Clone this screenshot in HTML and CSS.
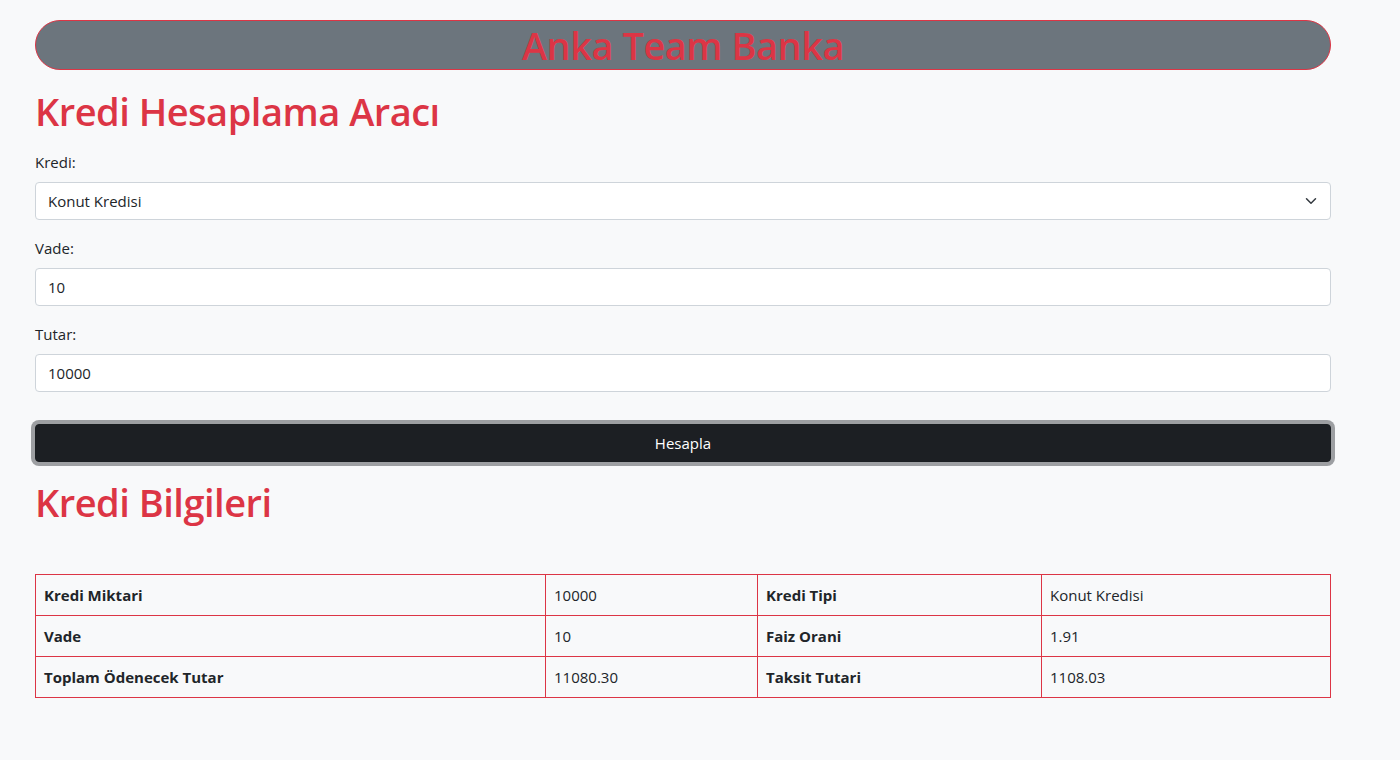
FILE: index.html
```html
<!DOCTYPE html>
<html lang="tr">
<head>
<meta charset="UTF-8">
<meta name="viewport" content="width=device-width, initial-scale=1.0">
<title>Anka Team Banka</title>
<link rel="stylesheet" href="styles.css">
</head>
<body>

<div class="container">

<h1 class="banner">Anka Team Banka</h1>

<h1 class="baslik">Kredi Hesaplama Aracı</h1>

<form class="form">
  <div class="alan">
    <label class="etiket" for="kredi">Kredi:</label>
    <div class="secim">
      <select id="kredi" class="kutu">
        <option>Konut Kredisi</option>
        <option>İhtiyaç Kredisi</option>
        <option>Taşıt Kredisi</option>
      </select>
      <svg class="ok" viewBox="0 0 16 16" width="16" height="12"><path d="m2 5 6 6 6-6" fill="none" stroke="#343a40" stroke-width="2" stroke-linecap="round" stroke-linejoin="round"/></svg>
    </div>
  </div>

  <div class="alan">
    <label class="etiket" for="vade">Vade:</label>
    <input id="vade" class="kutu" type="text" value="10">
  </div>

  <div class="alan">
    <label class="etiket" for="tutar">Tutar:</label>
    <input id="tutar" class="kutu" type="text" value="10000">
  </div>

  <button type="button" class="buton">Hesapla</button>
</form>

<h1 class="baslik baslik-alt">Kredi Bilgileri</h1>

<table class="tablo">
  <colgroup>
    <col style="width:510px">
    <col style="width:212px">
    <col style="width:284px">
    <col style="width:289px">
  </colgroup>
  <tr>
    <th>Kredi Miktari</th><td>10000</td>
    <th>Kredi Tipi</th><td>Konut Kredisi</td>
  </tr>
  <tr>
    <th>Vade</th><td>10</td>
    <th>Faiz Orani</th><td>1.91</td>
  </tr>
  <tr>
    <th>Toplam Ödenecek Tutar</th><td>11080.30</td>
    <th>Taksit Tutari</th><td>1108.03</td>
  </tr>
</table>

</div>

</body>
</html>
```

FILE: styles.css
```css
* {
  box-sizing: border-box;
}

body {
  margin: 0;
  background-color: #f8f9fa;
  color: #212529;
  font-family: "Open Sans", "Noto Sans", sans-serif;
  font-size: 15px;
  line-height: 24px;
}

.container {
  width: 1296px;
  margin: 0 35px;
}

h1 {
  font-size: 38px;
  font-weight: 600;
  line-height: 48px;
  letter-spacing: -0.5px;
  color: #dc3545;
}

.banner {
  margin: 20px 0 0;
  background-color: #6c757d;
  border: 1px solid #dc3545;
  border-radius: 25px;
  text-align: center;
}

.baslik {
  margin: 17px 0 15px;
}

.baslik-alt {
  margin: 16px 0 8px;
}

.alan {
  margin-bottom: 16px;
}

.etiket {
  display: block;
  margin-bottom: 8px;
}

.secim {
  position: relative;
}

.kutu {
  display: block;
  width: 100%;
  height: 38px;
  padding: 6px 12px;
  font: inherit;
  color: #212529;
  background-color: #fff;
  border: 1px solid #ced4da;
  border-radius: 4px;
  appearance: none;
  outline: none;
}

.ok {
  position: absolute;
  right: 12px;
  top: 13px;
  pointer-events: none;
}

.buton {
  display: block;
  width: 100%;
  height: 38px;
  margin-top: 32px;
  padding: 6px 12px;
  font: inherit;
  color: #fff;
  background-color: #1c1f23;
  border: 1px solid #1a1e21;
  border-radius: 4px;
  box-shadow: 0 0 0 4px rgba(66, 70, 73, 0.5);
  cursor: pointer;
}

.tablo {
  width: 1295px;
  margin-top: 48px;
  border-collapse: collapse;
  table-layout: fixed;
}

.tablo th,
.tablo td {
  padding: 8px;
  border: 1px solid #dc3545;
  text-align: left;
  vertical-align: top;
}

.tablo th {
  font-weight: 700;
}

.tablo td {
  font-weight: 400;
}
```
